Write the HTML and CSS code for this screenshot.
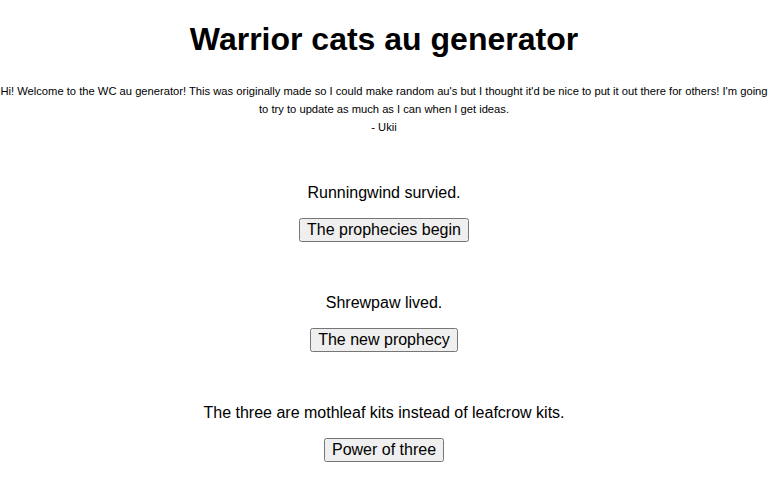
FILE: index.html
```html
<!DOCTYPE html>
<html lang="en">
<head>
<meta charset="utf-8">
<title>Warrior cats au generator</title>
<link rel="stylesheet" href="styles.css">
</head>
<body>
<h1 class="title">Warrior cats au generator</h1>
<p class="intro">Hi! Welcome to the WC au generator! This was originally made so I could make random au's but I thought it'd be nice to put it out there for others! I'm going to try to update as much as I can when I get ideas.<br>- Ukii</p>

<div class="au-list">
  <section class="au">
    <p class="au-text">Runningwind survied.</p>
    <button class="au-btn" type="button">The prophecies begin</button>
  </section>
  <section class="au">
    <p class="au-text">Shrewpaw lived.</p>
    <button class="au-btn" type="button">The new prophecy</button>
  </section>
  <section class="au">
    <p class="au-text">The three are mothleaf kits instead of leafcrow kits.</p>
    <button class="au-btn" type="button">Power of three</button>
  </section>
</div>
</body>
</html>
```
FILE: styles.css
```css
body {
  margin: 0;
  font-family: "Liberation Sans", Arial, sans-serif;
  color: #000;
  background: #fff;
  text-align: center;
}

.title {
  font-size: 32px;
  font-weight: bold;
  margin: 18px 0 0;
  line-height: 42px;
}

.intro {
  font-size: 11.2px;
  line-height: 18px;
  margin: 22px 0 0;
}

.au-list {
  display: flex;
  flex-direction: column;
  align-items: center;
  gap: 52px;
  margin-top: 48px;
}

.au {
  display: flex;
  flex-direction: column;
  align-items: center;
}

.au-text {
  font-size: 16px;
  line-height: 18px;
  margin: 0 0 16px;
}

.au-btn {
  font-family: "Liberation Sans", Arial, sans-serif;
  font-size: 16px;
  padding: 1px 6px;
}
```
